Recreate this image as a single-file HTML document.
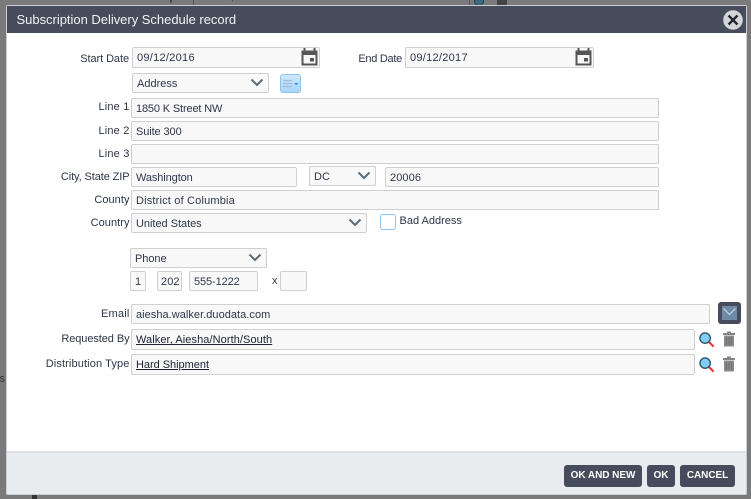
<!DOCTYPE html>
<html><head><meta charset="utf-8"><style>
html,body{margin:0;padding:0}
body{width:751px;height:499px;overflow:hidden;position:relative;background:#7a7a7a;font-family:"Liberation Sans",sans-serif;font-size:11px;color:#2e3547}
div,span,a{position:absolute;box-sizing:border-box;white-space:nowrap}
.modal{left:6px;top:5px;width:741px;height:490px;background:#fff;border:1px solid #c9ccd0;border-radius:2px}
.hd{left:7px;top:6px;width:739px;height:27px;background:#474c5c;color:#f2f3f5;font-size:13px;line-height:27px;padding-left:9.5px;letter-spacing:-.02px}
.ft{left:7px;top:451px;width:739px;height:43px;background:#e9ecef;border-top:2px solid #dcdfe3}
.l{text-align:right;right:621.5px;line-height:14px;letter-spacing:.05px}
.f{background:#f8f8f8;border:1px solid #cfcfcf;border-radius:2px;height:20px;line-height:20px;padding-left:4px;letter-spacing:.05px;color:#30364a}
.b{background:#474c5c;color:#fff;top:465px;height:22px;line-height:21px;border-radius:3px;text-align:center;font-size:10px;font-weight:bold;letter-spacing:-.05px}
svg{position:absolute;overflow:visible}
a{color:#1c2030;text-decoration:underline}
</style></head><body>
<div style="left:145px;top:-9px;font-size:11px;color:#333;font-weight:bold;letter-spacing:.3px">Recipient</div>
<div style="left:197px;top:-9px;font-size:11px;color:#333;letter-spacing:.1px">Walker, Aiesha/North/South</div>
<div style="left:193px;top:0;width:1px;height:5px;background:#555"></div>
<div style="left:469px;top:0;width:1px;height:5px;background:#5c5c5c"></div>
<div style="left:474px;top:-3px;width:10px;height:9px;border-radius:50%;background:#3c6a82;border:1px solid #274252"></div>
<div style="left:497px;top:0;width:10px;height:5px;background:#444"></div>
<div style="left:-3px;top:373px;color:#3a3a3a">is</div>
<div style="left:32px;top:495px;width:5px;height:4px;background:#333"></div>

<div class="modal"></div>
<div class="hd">Subscription Delivery Schedule record</div>
<svg style="left:723px;top:10px" width="20" height="20" viewBox="0 0 20 20"><circle cx="10" cy="10" r="9.8" fill="#d3d5d8"/><path d="M5.500 5.500L14.500 14.500M14.500 5.500L5.500 14.500" stroke="#23262e" stroke-width="2.300"/></svg>

<div class="l" style="top:52px;right:622px;letter-spacing:-.08px">Start Date</div>
<div class="f" style="left:132px;top:47px;width:188px;height:21px;line-height:21px;letter-spacing:.28px">09/12/2016</div>
<svg style="left:301px;top:48px" width="17" height="18" viewBox="0 0 17 18"><path d="M1.500 3.500H15.500V16.500H1.500Z" fill="none" stroke="#555" stroke-width="2"/><path d="M1 3H16V7H1Z" fill="#555"/><path d="M3.500 0V3M13.500 0V3" stroke="#555" stroke-width="2"/><rect x="9" y="10" width="4" height="3.500" fill="#555"/></svg>
<div class="l" style="top:52px;right:349px;letter-spacing:-.28px">End Date</div>
<div class="f" style="left:405px;top:47px;width:189px;height:21px;line-height:21px;letter-spacing:.28px">09/12/2017</div>
<svg style="left:575px;top:48px" width="17" height="18" viewBox="0 0 17 18"><path d="M1.500 3.500H15.500V16.500H1.500Z" fill="none" stroke="#555" stroke-width="2"/><path d="M1 3H16V7H1Z" fill="#555"/><path d="M3.500 0V3M13.500 0V3" stroke="#555" stroke-width="2"/><rect x="9" y="10" width="4" height="3.500" fill="#555"/></svg>

<div class="f" style="left:132px;top:73px;width:137px;letter-spacing:0">Address</div>
<svg style="left:250px;top:78px" width="14" height="9" viewBox="0 0 14 9"><path d="M1.500 1.500L7 7L12.500 1.500" fill="none" stroke="#5a6b78" stroke-width="2"/></svg>
<div style="left:280px;top:74px;width:21px;height:19px;background:linear-gradient(#cfe8fc,#a9d6fb);border:1px solid #8ec4ee;border-radius:3px"></div>
<svg style="left:283px;top:79px" width="17" height="10" viewBox="0 0 17 10"><path d="M0 1.500H9M0 4.500H9M0 7.500H9" stroke="#9cc0dc" stroke-width="1.200"/><path d="M11 4H15.500L13.250 6.500Z" fill="#4f90c6"/></svg>

<div class="l" style="top:100px;letter-spacing:.18px">Line 1</div>
<div class="f" style="left:131px;top:98px;width:528px;letter-spacing:-.15px">1850 K Street NW</div>
<div class="l" style="top:124px;letter-spacing:.18px">Line 2</div>
<div class="f" style="left:131px;top:121px;width:528px;letter-spacing:-.1px">Suite 300</div>
<div class="l" style="top:147px;letter-spacing:.18px">Line 3</div>
<div class="f" style="left:131px;top:144px;width:528px"></div>
<div class="l" style="top:170px;letter-spacing:-.1px">City, State ZIP</div>
<div class="f" style="left:131px;top:167px;width:166px;letter-spacing:-.1px">Washington</div>
<div class="f" style="left:309px;top:166px;width:67px">DC</div>
<svg style="left:357px;top:171px" width="14" height="9" viewBox="0 0 14 9"><path d="M1.500 1.500L7 7L12.500 1.500" fill="none" stroke="#5a6b78" stroke-width="2"/></svg>
<div class="f" style="left:385px;top:167px;width:274px;letter-spacing:.1px">20006</div>
<div class="l" style="top:193px;letter-spacing:.05px">County</div>
<div class="f" style="left:131px;top:190px;width:528px;letter-spacing:.18px">District of Columbia</div>
<div class="l" style="top:216px;letter-spacing:.05px">Country</div>
<div class="f" style="left:131px;top:213px;width:236px;letter-spacing:-.03px">United States</div>
<svg style="left:348px;top:218px" width="14" height="9" viewBox="0 0 14 9"><path d="M1.500 1.500L7 7L12.500 1.500" fill="none" stroke="#5a6b78" stroke-width="2"/></svg>
<div style="left:380px;top:214px;width:16px;height:16px;background:#fff;border:1px solid #8dc3ee;border-radius:3px"></div>
<div style="left:399.500px;top:214px;line-height:14px;letter-spacing:0">Bad Address</div>

<div class="f" style="left:130px;top:248px;width:137px;letter-spacing:-.05px">Phone</div>
<svg style="left:248px;top:253px" width="14" height="9" viewBox="0 0 14 9"><path d="M1.500 1.500L7 7L12.500 1.500" fill="none" stroke="#5a6b78" stroke-width="2"/></svg>
<div class="f" style="left:130px;top:271px;width:16px;padding-left:4px">1</div>
<div class="f" style="left:157px;top:271px;width:25px;padding-left:3px;letter-spacing:.1px">202</div>
<div class="f" style="left:189px;top:271px;width:69px;letter-spacing:-.1px">555-1222</div>
<div style="left:272px;top:274px;line-height:14px">x</div>
<div class="f" style="left:280px;top:271px;width:27px"></div>

<div class="l" style="top:307px;letter-spacing:.2px">Email</div>
<div class="f" style="left:131px;top:304px;width:579px;letter-spacing:.04px">aiesha.walker.duodata.com</div>
<div style="left:718px;top:302px;width:23px;height:22px;background:#474c5c;border-radius:3px"></div>
<svg style="left:722px;top:306px" width="15" height="14" viewBox="0 0 15 14"><rect width="15" height="14" fill="#6d8aa6"/><path d="M1.500 2.500L7.500 8.500L13.500 2.500" fill="none" stroke="#c3ced8" stroke-width="1.300"/></svg>

<div class="l" style="top:332px;letter-spacing:-.08px">Requested By</div>
<div class="f" style="left:131px;top:329px;width:564px;height:21px;line-height:21px;letter-spacing:.08px"><a style="position:static">Walker, Aiesha/North/South</a></div>
<svg style="left:699px;top:332px" width="16" height="16" viewBox="0 0 17 17"><path d="M10.500 10.500L15.500 15.500" stroke="#e8352f" stroke-width="2.200"/><circle cx="6.500" cy="6.500" r="5.500" fill="#7fd0f5" stroke="#36566b" stroke-width="1.500"/></svg>
<svg style="left:723px;top:331px" width="12" height="16" viewBox="0 0 12 16"><path d="M0 2H12V4H0ZM4 0.500H8V2H4Z" fill="#858585"/><path d="M1 4.500H11V15.500H1Z" fill="#8a8a8a"/><path d="M3.500 6V14M6 6V14M8.500 6V14" stroke="#6e6e6e" stroke-width="1"/></svg>

<div class="l" style="top:357px;letter-spacing:.12px">Distribution Type</div>
<div class="f" style="left:131px;top:354px;width:564px;height:21px;line-height:21px;letter-spacing:-.03px"><a style="position:static">Hard Shipment</a></div>
<svg style="left:699px;top:357px" width="16" height="16" viewBox="0 0 17 17"><path d="M10.500 10.500L15.500 15.500" stroke="#e8352f" stroke-width="2.200"/><circle cx="6.500" cy="6.500" r="5.500" fill="#7fd0f5" stroke="#36566b" stroke-width="1.500"/></svg>
<svg style="left:723px;top:356px" width="12" height="16" viewBox="0 0 12 16"><path d="M0 2H12V4H0ZM4 0.500H8V2H4Z" fill="#858585"/><path d="M1 4.500H11V15.500H1Z" fill="#8a8a8a"/><path d="M3.500 6V14M6 6V14M8.500 6V14" stroke="#6e6e6e" stroke-width="1"/></svg>

<div class="ft"></div>
<div class="b" style="left:564px;width:78px">OK AND NEW</div>
<div class="b" style="left:647px;width:28px">OK</div>
<div class="b" style="left:680px;width:55px">CANCEL</div>
</body></html>
